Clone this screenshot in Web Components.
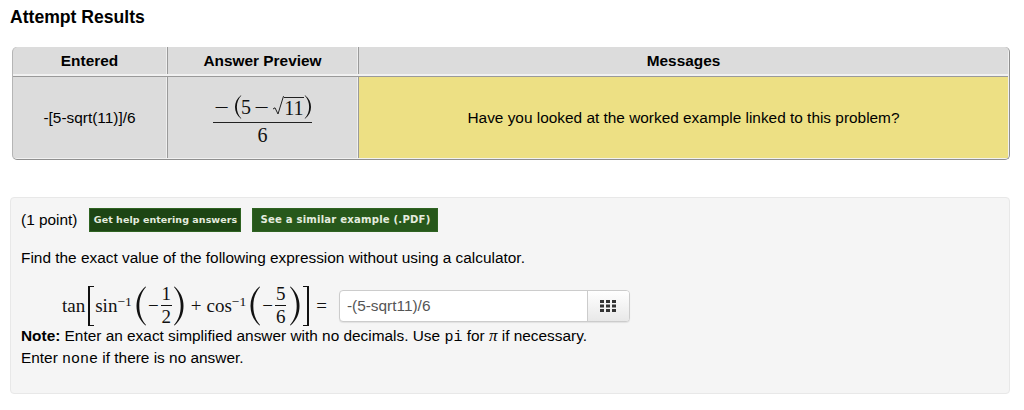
<!DOCTYPE html>
<html>
<head>
<meta charset="utf-8">
<title>Attempt Results</title>
<style>
  html, body { margin: 0; padding: 0; background: #fff; }
  body { font-family: "Liberation Sans", Arial, sans-serif; font-size: 15.4px; color: #000; width: 1024px; height: 410px; overflow: hidden; }
</style>
</head>
<body>
<attempt-results>
  <result-cell slot="h" head>Entered</result-cell>
  <result-cell slot="h" head>Answer Preview</result-cell>
  <result-cell slot="h" head tone="last">Messages</result-cell>
  <result-cell slot="b">-[5-sqrt(11)]/6</result-cell>
  <result-cell slot="b"><answer-preview></answer-preview></result-cell>
  <result-cell slot="b" tone="msg">Have you looked at the worked example linked to this problem?</result-cell>
</attempt-results>
<problem-box>
  <span slot="top">(1 point)</span>
  <help-button slot="top" kind="small">Get help entering answers</help-button>
  <help-button slot="top">See a similar example (.PDF)</help-button>
  <problem-equation slot="eq"></problem-equation>
</problem-box>

<script>
// stretchy delimiter, drawn since a font glyph can't stretch that tall
const paren = (flip, w = 12, h = 40) => `<svg width="${w}" height="${h}" viewBox="0 0 12 42" preserveAspectRatio="none" style="display:block;${flip ? "transform:scaleX(-1)" : ""}"><path d="M10.5 .5C4.500 6 1.500 13 1.500 21S4.500 36 10.500 41.500L11 41C6.500 35.500 4.300 29 4.300 21S6.500 6.500 11 1Z" fill="#111"/></svg>`;

class ResultCell extends HTMLElement {
  constructor() {
    super();
    this.attachShadow({ mode: "open" }).innerHTML = `
      <style>
        :host{display:flex;align-items:center;justify-content:center;background:#dcdcdc;font-size:15.4px;color:#000;box-sizing:border-box;border-right:1px solid #efefef}
        :host([head]){font-weight:700}
        :host([tone=msg]){background:#ede084;border-right:0}
        :host([tone=last]){border-right:0}
      </style>
      <slot></slot>`;
  }
}
customElements.define("result-cell", ResultCell);

class AttemptResults extends HTMLElement {
  constructor() {
    super();
    this.attachShadow({ mode: "open" }).innerHTML = `
      <style>
        :host{display:block;padding:7px 14px 0 10px}
        h2{margin:0 0 20px;font-size:17.6px;line-height:20px;font-weight:700}
        .tbl{display:grid;width:998px;margin-left:2px;box-sizing:border-box;height:113px;border-radius:5px;
          border-right:1px solid #8f8f8f;border-bottom:1px solid #8f8f8f;border-left:1px solid #b5b5b5;padding:0 1px 1px 0;
          grid-template-rows:27px 81px;row-gap:3px;background:#f1f1f1;overflow:hidden}
        .row{display:grid;grid-template-columns:154px 190px 649px;column-gap:1px;background:#9a9a9a}
        .row.b{border-top:1px solid #9a9a9a;margin-top:-1px}
      </style>
      <h2>Attempt Results</h2>
      <div class="tbl">
        <div class="row"><slot name="h"></slot></div>
        <div class="row b"><slot name="b"></slot></div>
      </div>`;
  }
}
customElements.define("attempt-results", AttemptResults);

class AnswerPreview extends HTMLElement {
  constructor() {
    super();
    this.attachShadow({ mode: "open" }).innerHTML = `
      <style>
        :host{display:inline-flex;flex-direction:column;align-items:stretch;font-family:"Liberation Serif",serif;font-size:20px;color:#111;width:99px;margin-top:4px}
        .num{display:flex;align-items:center;box-sizing:border-box;height:30px;border-bottom:1px solid #222;padding-left:1px}
        .den{text-align:center;line-height:24px}
        .mn{display:inline-block;width:15px;text-align:center;transform:scaleX(1.3)}
        .rad{display:flex;align-items:flex-end;margin-left:3px}
        .rad span{border-top:1px solid #222;line-height:20px;width:20px;text-align:center}
      </style>
      <div class="num">
        <span class="mn" style="margin-right:5px">−</span>
        ${paren(false, 8, 24)}
        <span style="margin-left:-1px">5</span>
        <span class="mn" style="margin-left:3px">−</span>
        <span class="rad"><svg width="12" height="22" viewBox="0 0 12 22" style="display:block"><path d="M1 13l2-1.2 3 6.2L11.4.5H12" fill="none" stroke="#222" stroke-width="1"/></svg><span>11</span></span>
        ${paren(true, 8, 24)}
      </div>
      <div class="den">6</div>`;
  }
}
customElements.define("answer-preview", AnswerPreview);

class HelpButton extends HTMLElement {
  constructor() {
    super();
    this.attachShadow({ mode: "open" }).innerHTML = `
      <style>
        :host{display:inline-flex;align-items:center;justify-content:center;box-sizing:border-box;height:24px;width:186px;
          background:#27581b;color:#e4ecdf;font-family:"DejaVu Sans",sans-serif;font-weight:700;font-size:10.1px;letter-spacing:.2px;white-space:nowrap;border:1px solid #2f6322}
        :host([kind=small]){width:152px;background:#1d4514;font-size:9.5px;letter-spacing:.05px}
      </style>
      <slot></slot>`;
  }
}
customElements.define("help-button", HelpButton);

class AnswerInput extends HTMLElement {
  constructor() {
    super();
    this.attachShadow({ mode: "open" }).innerHTML = `
      <style>
        :host{display:inline-flex;height:32px;width:291px;box-sizing:border-box;border:1px solid #ccc;border-radius:4px;background:#fff;box-shadow:0 1px 1px rgba(0,0,0,.08);overflow:hidden;font-size:15.4px;color:#555}
        .val{flex:1;display:flex;align-items:center;padding-left:7px}
        .btn{width:41px;border-left:1px solid #ccc;background:linear-gradient(#fff,#e8e8e8);display:flex;align-items:center;justify-content:center}
      </style>
      <div class="val"><slot></slot></div>
      <div class="btn"><svg width="16" height="12" viewBox="0 0 16 12" fill="#333">
        <path d="M0 0h4v3H0zM6 0h4v3H6zM12 0h4v3h-4zM0 4.500h4v3H0zM6 4.500h4v3H6zM12 4.500h4v3h-4zM0 9h4v3H0zM6 9h4v3H6zM12 9h4v3h-4z"/></svg></div>`;
  }
}
customElements.define("answer-input", AnswerInput);

class MathFrac extends HTMLElement {
  constructor() {
    super();
    this.attachShadow({ mode: "open" }).innerHTML = `
      <style>
        :host{display:inline-flex;flex-direction:column;align-items:center;width:11px;font-size:19px;line-height:20px;margin-top:-2px}
        .t{border-bottom:1px solid #111;width:100%;text-align:center;padding-bottom:1px}
        .b{padding-top:1px}
      </style>
      <div class="t">${this.getAttribute("n")}</div><div class="b">${this.getAttribute("d")}</div>`;
  }
}
customElements.define("math-frac", MathFrac);

class ProblemEquation extends HTMLElement {
  constructor() {
    super();
    this.attachShadow({ mode: "open" }).innerHTML = `
      <style>
        :host{display:flex;align-items:center;height:44px;padding-left:41px;font-family:"Liberation Serif",serif;font-size:19px;color:#111;white-space:nowrap}
        sup{font-size:13.500px;line-height:0;position:relative;top:-6px;vertical-align:baseline}
        .br{width:6px;height:40px;box-sizing:border-box;border:solid #111;border-width:1px 0 1px 2px}
        .br.r{border-width:1px 2px 1px 0}
        .mn{width:13px;text-align:center}
        answer-input{margin-left:12px;font-family:"Liberation Sans",sans-serif}
      </style>
      <span style="margin-right:3px">tan</span>
      <span class="br" style="margin-right:1px"></span>
      <span>sin<sup>−1</sup></span>
      <span style="margin-left:3px">${paren(false)}</span>
      <span class="mn">−</span>
      <math-frac n="1" d="2" style="margin-left:1px"></math-frac>
      <span style="margin-left:1px">${paren(true)}</span>
      <span style="margin:0 5px 0 6px">+</span>
      <span>cos<sup>−1</sup></span>
      <span style="margin-left:3px">${paren(false)}</span>
      <span class="mn">−</span>
      <math-frac n="5" d="6" style="margin-left:1px"></math-frac>
      <span style="margin-left:3px">${paren(true)}</span>
      <span class="br r" style="margin-left:2px"></span>
      <span style="margin-left:7px">=</span>
      <answer-input>-(5-sqrt11)/6</answer-input>`;
  }
}
customElements.define("problem-equation", ProblemEquation);

class ProblemBox extends HTMLElement {
  constructor() {
    super();
    this.attachShadow({ mode: "open" }).innerHTML = `
      <style>
        :host{display:block;box-sizing:border-box;width:1000px;height:197px;margin:37px 0 0 10px;padding:10px;background:#f5f5f5;border:1px solid #e8e8e8;border-radius:4px;font-size:15.4px;line-height:22px}
        .top{display:flex;align-items:center;height:24px;gap:11px}
        .top ::slotted(span){margin-right:1px}
        p{margin:0}
        .find{margin-top:15px;height:22px}
        .eq{margin-top:15px}
        .note{margin-top:-3px}
        code{font-family:"Liberation Mono",monospace;font-size:15px;line-height:1}
        i{font-family:"Liberation Serif",serif;font-size:17px;line-height:1}
      </style>
      <div class="top"><slot name="top"></slot></div>
      <p class="find">Find the exact value of the following expression without using a calculator.</p>
      <div class="eq"><slot name="eq"></slot></div>
      <p class="note"><b>Note:</b> Enter an exact simplified answer with no decimals. Use <code>pi</code> for <i>π</i> if necessary.</p>
      <p>Enter <code>none</code> if there is no answer.</p>`;
  }
}
customElements.define("problem-box", ProblemBox);
</script>
</body>
</html>
